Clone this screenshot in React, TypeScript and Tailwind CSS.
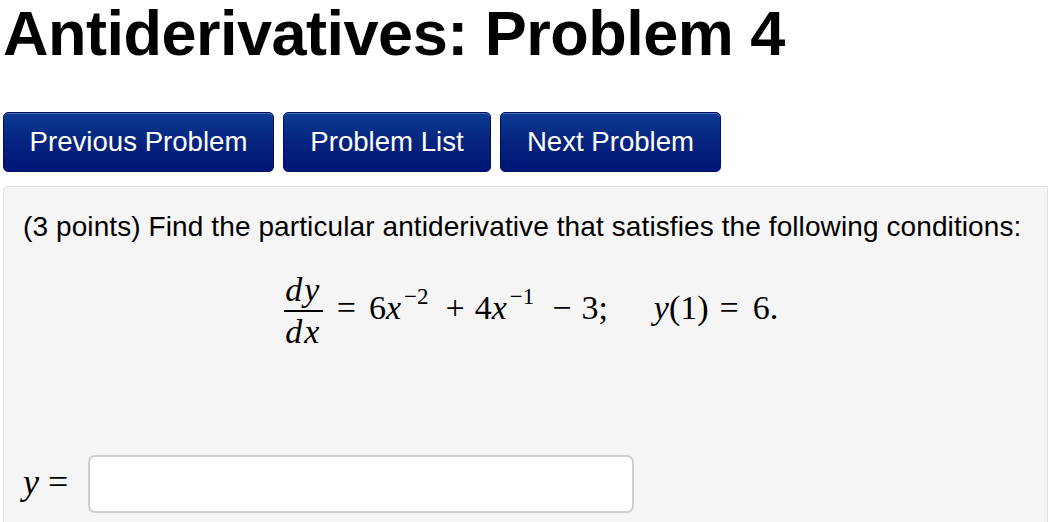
import React from "react";

const sans = { fontFamily: '"Liberation Sans", Arial, sans-serif' };
const serif = { fontFamily: '"Liberation Serif", "Times New Roman", serif' };

function Btn({ children, w }: { children: React.ReactNode; w: string }) {
  return (
    <button
      className={`${w} h-[60px] flex items-center justify-center rounded-[5px] border border-[#001060] bg-gradient-to-b from-[#0d3b94] via-[#06247f] to-[#001577] text-white text-[27.6px] leading-none shadow-[inset_0_1px_0_rgba(255,255,255,0.25)]`}
      style={sans}
    >
      {children}
    </button>
  );
}

export default function App() {
  return (
    <div className="w-[1048px] h-[522px] overflow-hidden bg-white text-black" style={sans}>
      <h1 className="ml-[3px] text-[63px] leading-[66px] font-bold tracking-[-0.5px] whitespace-nowrap">
        Antiderivatives: Problem 4
      </h1>
      <div className="flex gap-[9px] ml-[3px] mt-[46px]">
        <Btn w="w-[271px]">Previous Problem</Btn>
        <Btn w="w-[208px]">Problem List</Btn>
        <Btn w="w-[221px]">Next Problem</Btn>
      </div>
      <div className="ml-[3px] mt-[14px] h-[400px] bg-[#f5f5f5] border border-[#e3e3e3] rounded-tl-[4px] pl-[19px] pr-[8px] pt-[24px]">
        <p className="text-[28px] leading-[32px] whitespace-nowrap tracking-[0.1px]">
          (3 points) Find the particular antiderivative that satisfies the following conditions:
        </p>
        <div className="flex justify-center items-center mt-[26px] text-[34px]" style={serif}>
          <span className="inline-flex flex-col items-center w-[39px]">
            <span className="italic leading-[41px] tracking-[2px]">dy</span>
            <span className="block w-[39px] h-[2px] bg-black"></span>
            <span className="italic leading-[39px] tracking-[2px]">dx</span>
          </span>
          <span className="whitespace-nowrap relative top-[-2px] leading-[40px]">
            <span className="ml-[14px]">=</span>
            <span className="ml-[13px]">6</span>
            <i>x</i>
            <sup className="ml-[3px] text-[23px] relative top-[-15px]">−2</sup>
            <span className="ml-[17px]">+</span>
            <span className="ml-[10px]">4</span>
            <i>x</i>
            <sup className="ml-[3px] text-[23px] relative top-[-15px]">−1</sup>
            <span className="ml-[18px]">−</span>
            <span className="ml-[10px]">3;</span>
            <i className="ml-[46px]">y</i>
            <span>(1)</span>
            <span className="ml-[11px]">=</span>
            <span className="ml-[14px]">6.</span>
          </span>
        </div>
        <div className="flex items-center mt-[104px]">
          <span className="text-[36px] mr-[20px] whitespace-nowrap relative top-[-2px]" style={serif}>
            <i>y</i> =
          </span>
          <input
            type="text"
            className="w-[546px] h-[58px] bg-white border-2 border-[#cfcfcf] rounded-[7px] outline-none"
          />
        </div>
      </div>
    </div>
  );
}
